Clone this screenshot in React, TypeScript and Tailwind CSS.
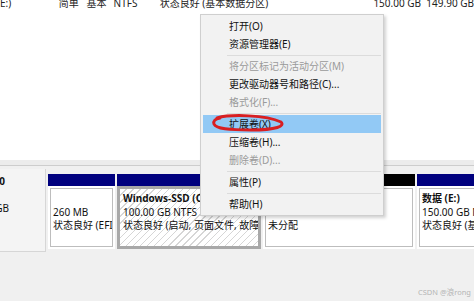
import React from "react";

const font = "font-['Segoe_UI','Noto_Sans','Noto_Sans_CJK_SC',sans-serif]";

type Item = { label: string; disabled?: boolean; active?: boolean } | "sep";

const items: Item[] = [
  { label: "打开(O)" },
  { label: "资源管理器(E)" },
  "sep",
  { label: "将分区标记为活动分区(M)", disabled: true },
  { label: "更改驱动器号和路径(C)..." },
  { label: "格式化(F)...", disabled: true },
  "sep",
  { label: "扩展卷(X)", active: true },
  { label: "压缩卷(H)..." },
  { label: "删除卷(D)...", disabled: true },
  "sep",
  { label: "属性(P)" },
  "sep",
  { label: "帮助(H)" },
];

function ContextMenu() {
  return (
    <div className="absolute left-[200px] top-[14px] w-[184px] bg-[#f2f2f2] border border-[#cfcfcf] shadow-[2px_2px_3px_rgba(0,0,0,0.18)] py-[2px] px-[2px] text-[10px] leading-[18px]">
      {items.map((it, i) =>
        it === "sep" ? (
          <div key={i} className="h-[4px] flex items-center pl-[24px]">
            <div className="h-px w-full bg-[#dcdcdc]" />
          </div>
        ) : (
          <div
            key={i}
            className={
              "relative h-[18px] pl-[26px] whitespace-nowrap " +
              (it.active ? "bg-[#92c9f5]" : "") +
              (it.disabled ? " text-[#9a9a9a]" : " text-[#111]")
            }
          >
            {it.label}
            {it.active && (
              <svg
                className="absolute left-[8px] top-[-2px]"
                width="74"
                height="20"
                viewBox="0 0 74 20"
              >
                <path
                  d="M6 5 C 20 1, 55 2, 70 9 C 74 13, 66 17, 40 17 C 18 17, 5 16, 3 11 C 2 8, 4 6, 9 5"
                  fill="none"
                  stroke="#d81f22"
                  strokeWidth="3"
                  strokeLinecap="round"
                />
              </svg>
            )}
          </div>
        )
      )}
    </div>
  );
}

function Partition({
  width,
  header,
  selected,
  children,
}: {
  width: string;
  header: string;
  selected?: boolean;
  children?: React.ReactNode;
}) {
  return (
    <div className={"flex flex-col shrink-0 " + width}>
      <div className={"h-[12px] " + header} />
      <div
        className={
          "flex-1 " +
          (selected ? "border-[3px] border-[#a8a8a8]" : "bg-white p-[2px]")
        }
      >
        <div
          className={
            "h-full overflow-hidden whitespace-nowrap pt-[3px] text-[10px] leading-[13.5px] text-[#111] " +
            (selected
              ? "px-[3px] bg-[repeating-linear-gradient(135deg,#ffffff_0px,#ffffff_4px,#d6d6d6_4px,#d6d6d6_5px)]"
              : "px-[2px] border border-[#bdbdbd] bg-white")
          }
        >
          {children}
        </div>
      </div>
    </div>
  );
}

export default function App() {
  return (
    <div className={"relative w-[474px] h-[301px] overflow-hidden bg-white " + font}>
      {/* upper volume list */}
      <div className="h-[160px] bg-white overflow-hidden">
        <div className="flex mt-[-4px] h-[14px] text-[10px] leading-[14px] text-[#222] whitespace-nowrap">
          <div className="w-[61px]">E:)</div>
          <div className="w-[29px]">简单</div>
          <div className="w-[28px]">基本</div>
          <div className="w-[48px]">NTFS</div>
          <div className="w-[222px]">状态良好 (基本数据分区)</div>
          <div className="w-[55px]">150.00 GB</div>
          <div>149.90 GB</div>
        </div>
      </div>
      <div className="h-[6px] bg-[#ececec] border-b border-[#cdcdcd]" />

      {/* lower disk map */}
      <div className="h-[135px] bg-[#f0f0f0] pt-[3px]">
        <div className="flex h-[83px]">
          <div className="w-[46px] shrink-0 bg-[#f4f4f4] border-r border-b border-[#d6d6d6] overflow-hidden pt-[6px] text-[10px] leading-[13.5px] text-[#111]">
            <div className="w-[5px] flex justify-end whitespace-nowrap font-bold">磁盘 0</div>
            <div className="h-[13.5px]" />
            <div className="w-[9px] flex justify-end whitespace-nowrap">250.00 GB</div>
          </div>
          <div className="flex-1 flex gap-[2px] pl-[2px] pt-[5px] pb-[3px] overflow-hidden">
            <Partition width="w-[67px]" header="bg-[#00007e]">
              <div className="h-[13.5px]" />
              <div>260 MB</div>
              <div>状态良好 (EFI 系统分区)</div>
            </Partition>
            <Partition width="w-[144px]" header="bg-[#00007e]" selected>
              <div className="font-bold">Windows-SSD (C:)</div>
              <div>100.00 GB NTFS</div>
              <div>状态良好 (启动, 页面文件, 故障转储, 基本数据分区)</div>
            </Partition>
            <Partition width="w-[152px]" header="bg-black">
              <div className="h-[13.5px]" />
              <div className="h-[13.5px]" />
              <div>未分配</div>
            </Partition>
            <Partition width="w-[60px]" header="bg-[#00007e]">
              <div className="font-bold">数据 (E:)</div>
              <div>150.00 GB NTFS</div>
              <div>状态良好 (基本数据分区)</div>
            </Partition>
          </div>
        </div>
      </div>

      <ContextMenu />

      <div className="absolute left-[418px] top-[287px] text-[7.5px] leading-[10px] text-[#b5b5b5] whitespace-nowrap">
        CSDN @浪rong
      </div>
    </div>
  );
}
